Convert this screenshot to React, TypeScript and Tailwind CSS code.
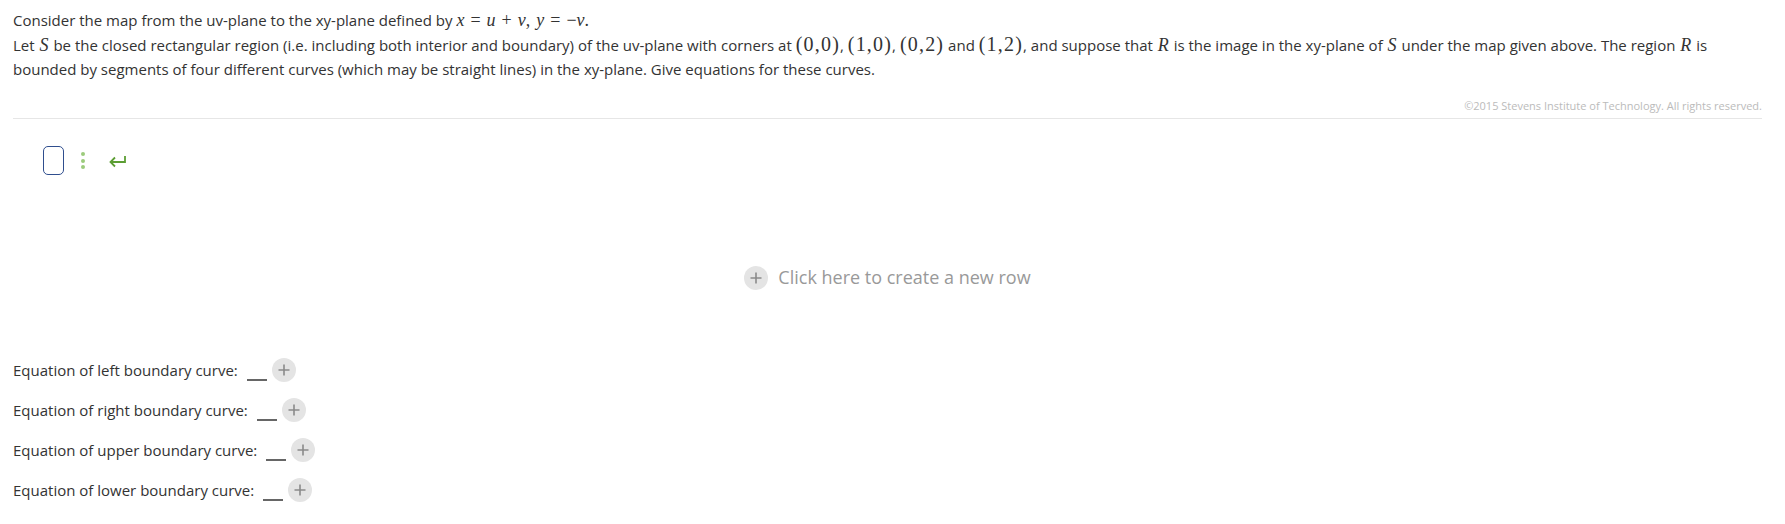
import React from "react";

const serif = { fontFamily: '"Liberation Serif", "DejaVu Serif", serif' };

const M = ({ children }: { children: React.ReactNode }) => (
  <span className="italic text-[18px] px-[1px]" style={serif}>
    {children}
  </span>
);
const V = ({ children }: { children: React.ReactNode }) => (
  <span className="italic text-[18px]" style={serif}>
    {children}
  </span>
);
const Op = ({ children }: { children: React.ReactNode }) => (
  <span className="text-[18px] mx-[6px]" style={serif}>
    {children}
  </span>
);
const T = ({ children }: { children: React.ReactNode }) => (
  <span className="text-[20px] tracking-[1.2px] font-light" style={serif}>
    {children}
  </span>
);

const PlusCircle = ({ size = 24 }: { size?: number }) => (
  <span
    className="inline-flex items-center justify-center rounded-full bg-[#e4e4e4]"
    style={{ width: size, height: size }}
  >
    <svg width="14" height="14" viewBox="0 0 14 14">
      <path d="M7 1.5v11M1.5 7h11" stroke="#8a8a8a" strokeWidth="1.6" />
    </svg>
  </span>
);

const EqRow = ({ label }: { label: string }) => (
  <div className="flex items-center h-[40px]">
    <span>{label}</span>
    <span className="ml-[9px] mt-[20px] w-[20px] h-[2px] bg-[#666]" />
    <span className="ml-[5px]">
      <PlusCircle />
    </span>
  </div>
);

export default function App() {
  return (
    <div
      className="w-[1785px] min-h-[524px] bg-white text-[#333] pl-[13px] pr-[23px] pt-[8px]"
      style={{ fontFamily: '"Open Sans", "Noto Sans", sans-serif' }}
    >
      <div className="text-[15px] leading-[24px]">
        <div>
          Consider the map from the uv-plane to the xy-plane defined by <V>x</V>
          <Op>=</Op>
          <V>u</V>
          <Op>+</Op>
          <V>v</V>
          <span className="text-[18px] mr-[6px]" style={serif}>,</span>
          <V>y</V>
          <Op>=</Op>
          <span className="text-[18px]" style={serif}>−</span>
          <V>v</V>
          <span className="text-[18px]" style={serif}>.</span>
        </div>
        <div>
          Let <M>S</M> be the closed rectangular region (i.e. including both interior and boundary) of the uv-plane
          with corners at <T>(0,0)</T>, <T>(1,0)</T>, <T>(0,2)</T> and <T>(1,2)</T>, and suppose that <M>R</M> is the
          image in the xy-plane of <M>S</M> under the map given above. The region <M>R</M> is
          <br />
          bounded by segments of four different curves (which may be straight lines) in the xy-plane. Give equations
          for these curves.
        </div>
      </div>

      <div className="mt-[17px] border-b border-[#e6e6e6] pb-[4px] text-right text-[11px] leading-[16px] text-[#bbbbbb]">
        ©2015 Stevens Institute of Technology. All rights reserved.
      </div>

      <div className="flex items-center pl-[30px] pt-[27px]">
        <div className="w-[21px] h-[29px] rounded-[5px] border-[1.5px] border-[#2f4e8e]" />
        <div className="ml-[17px] flex flex-col gap-[2.5px]">
          <span className="w-[4px] h-[4px] rounded-full bg-[#9ccb7c]" />
          <span className="w-[4px] h-[4px] rounded-full bg-[#9ccb7c]" />
          <span className="w-[4px] h-[4px] rounded-full bg-[#9ccb7c]" />
        </div>
        <svg className="ml-[23px]" width="19" height="15" viewBox="0 0 19 15">
          <path d="M17 3v6H2.5" fill="none" stroke="#5c9e34" strokeWidth="1.8" />
          <path d="M7 4.5L2.5 9L7 13.5" fill="none" stroke="#5c9e34" strokeWidth="1.8" />
        </svg>
      </div>

      <div className="flex justify-center mt-[89px]">
        <div className="flex items-center gap-[10px] text-[18px] text-[#999] cursor-pointer">
          <PlusCircle />
          <span>Click here to create a new row</span>
        </div>
      </div>

      <div className="mt-[59px] text-[15px]">
        <EqRow label="Equation of left boundary curve:" />
        <EqRow label="Equation of right boundary curve:" />
        <EqRow label="Equation of upper boundary curve:" />
        <EqRow label="Equation of lower boundary curve:" />
      </div>
    </div>
  );
}
